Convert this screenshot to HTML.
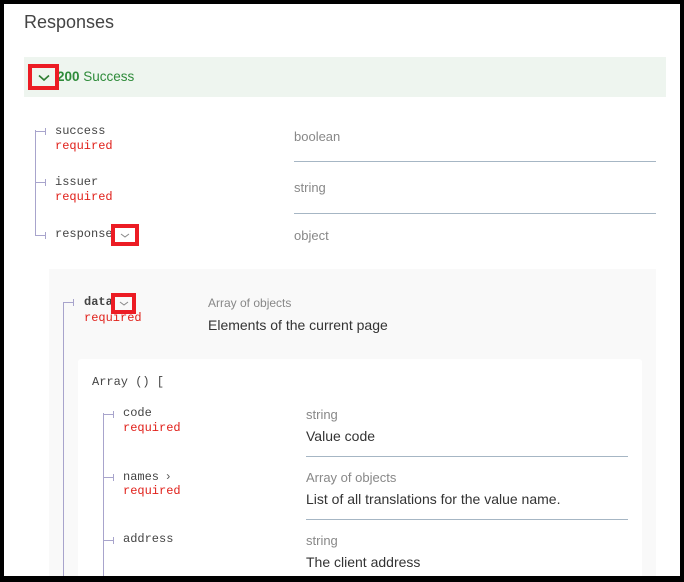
<!DOCTYPE html>
<html><head><style>
*{margin:0;padding:0;box-sizing:border-box}
body{width:684px;height:582px;background:#000;position:relative;overflow:hidden;font-family:"Liberation Sans",sans-serif}
.pg{position:absolute;left:4px;top:4px;width:676px;height:572px;background:#fff;overflow:hidden}
.a{position:absolute;white-space:nowrap}
.m{font-family:"Liberation Mono",monospace;font-size:12px;color:#444}
.r{font-family:"Liberation Mono",monospace;font-size:12px;color:#e0201a}
.g{font-size:13px;color:#888}
.d{font-size:14px;color:#333}
.vl{position:absolute;width:1px;background:#a8a4cc}
.hl{position:absolute;height:1px;background:#a8a4cc}
.tk{position:absolute;width:1px;height:7px;background:#a8a4cc}
.ln{position:absolute;height:1px;background:#a6b6c4}
.box{position:absolute;border:4px solid #ec1c24}
</style></head><body><div class="pg">
<div class="a" style="left:20px;top:8px;font-size:18px;color:#444">Responses</div>
<div class="a" style="left:20px;top:53px;width:642px;height:40px;background:#eef5ef"></div>
<div class="a" style="left:53px;top:65px;font-size:13.5px;color:#2e8b3a"><b>200</b> Success</div>
<div class="box" style="left:24px;top:60px;width:31px;height:26px;background:#eef5ef"></div>
<svg class="a" style="left:33px;top:69px" width="14" height="10"><path d="M2 2.5 L7 7 L12 2.5" stroke="#2e7d32" stroke-width="1.6" fill="none"/></svg>

<div class="vl" style="left:31px;top:126px;height:106px"></div>
<div class="hl" style="left:31px;top:127px;width:10px"></div><div class="tk" style="left:41px;top:124px"></div>
<div class="hl" style="left:31px;top:178px;width:10px"></div><div class="tk" style="left:41px;top:175px"></div>
<div class="hl" style="left:31px;top:231px;width:10px"></div><div class="tk" style="left:41px;top:228px"></div>
<div class="a m" style="left:51px;top:120px">success</div><div class="a r" style="left:51px;top:135px">required</div>
<div class="a m" style="left:51px;top:171px">issuer</div><div class="a r" style="left:51px;top:186px">required</div>
<div class="a m" style="left:51px;top:223px">response</div>
<div class="box" style="left:107px;top:220px;width:28px;height:22px;background:#fff"></div>
<svg class="a" style="left:115px;top:228px" width="12" height="8"><path d="M2 2 L6 5 L10 2" stroke="#888" stroke-width="1" fill="none"/></svg>
<div class="a g" style="left:290px;top:125px">boolean</div><div class="ln" style="left:290px;top:157px;width:362px"></div>
<div class="a g" style="left:290px;top:176px">string</div><div class="ln" style="left:290px;top:209px;width:362px"></div>
<div class="a g" style="left:290px;top:224px">object</div>

<div class="a" style="left:45px;top:265px;width:607px;height:320px;background:#f9f9f9"></div>
<div class="vl" style="left:59px;top:298px;height:280px"></div>
<div class="hl" style="left:59px;top:298px;width:10px"></div><div class="tk" style="left:69px;top:295px"></div>
<div class="a m" style="left:80px;top:291px;font-weight:bold">data</div><div class="a r" style="left:80px;top:307px">required</div>
<div class="box" style="left:107px;top:289px;width:25px;height:21px;background:#f9f9f9"></div>
<svg class="a" style="left:114px;top:296px" width="12" height="8"><path d="M2 2 L6 5 L10 2" stroke="#888" stroke-width="1" fill="none"/></svg>
<div class="a" style="left:204px;top:292px;font-size:12px;color:#888">Array of objects</div>
<div class="a d" style="left:204px;top:313px">Elements of the current page</div>

<div class="a" style="left:74px;top:355px;width:564px;height:230px;background:#fff;border-radius:3px"></div>
<div class="a m" style="left:88px;top:371px">Array () [</div>
<div class="vl" style="left:99px;top:409px;height:170px"></div>
<div class="hl" style="left:99px;top:410px;width:10px"></div><div class="tk" style="left:109px;top:407px"></div>
<div class="hl" style="left:99px;top:473px;width:10px"></div><div class="tk" style="left:109px;top:470px"></div>
<div class="hl" style="left:99px;top:536px;width:10px"></div><div class="tk" style="left:109px;top:533px"></div>
<div class="a m" style="left:119px;top:402px">code</div><div class="a r" style="left:119px;top:417px">required</div>
<div class="a m" style="left:119px;top:465px">names <span style="font-family:'Liberation Sans';color:#555">›</span></div><div class="a r" style="left:119px;top:480px">required</div>
<div class="a m" style="left:119px;top:528px">address</div>
<div class="a g" style="left:302px;top:403px">string</div><div class="a d" style="left:302px;top:424px">Value code</div>
<div class="ln" style="left:302px;top:452px;width:322px"></div>
<div class="a g" style="left:302px;top:466px">Array of objects</div><div class="a d" style="left:302px;top:487px">List of all translations for the value name.</div>
<div class="ln" style="left:302px;top:515px;width:322px"></div>
<div class="a g" style="left:302px;top:529px">string</div><div class="a d" style="left:302px;top:550px">The client address</div>
</div></body></html>
